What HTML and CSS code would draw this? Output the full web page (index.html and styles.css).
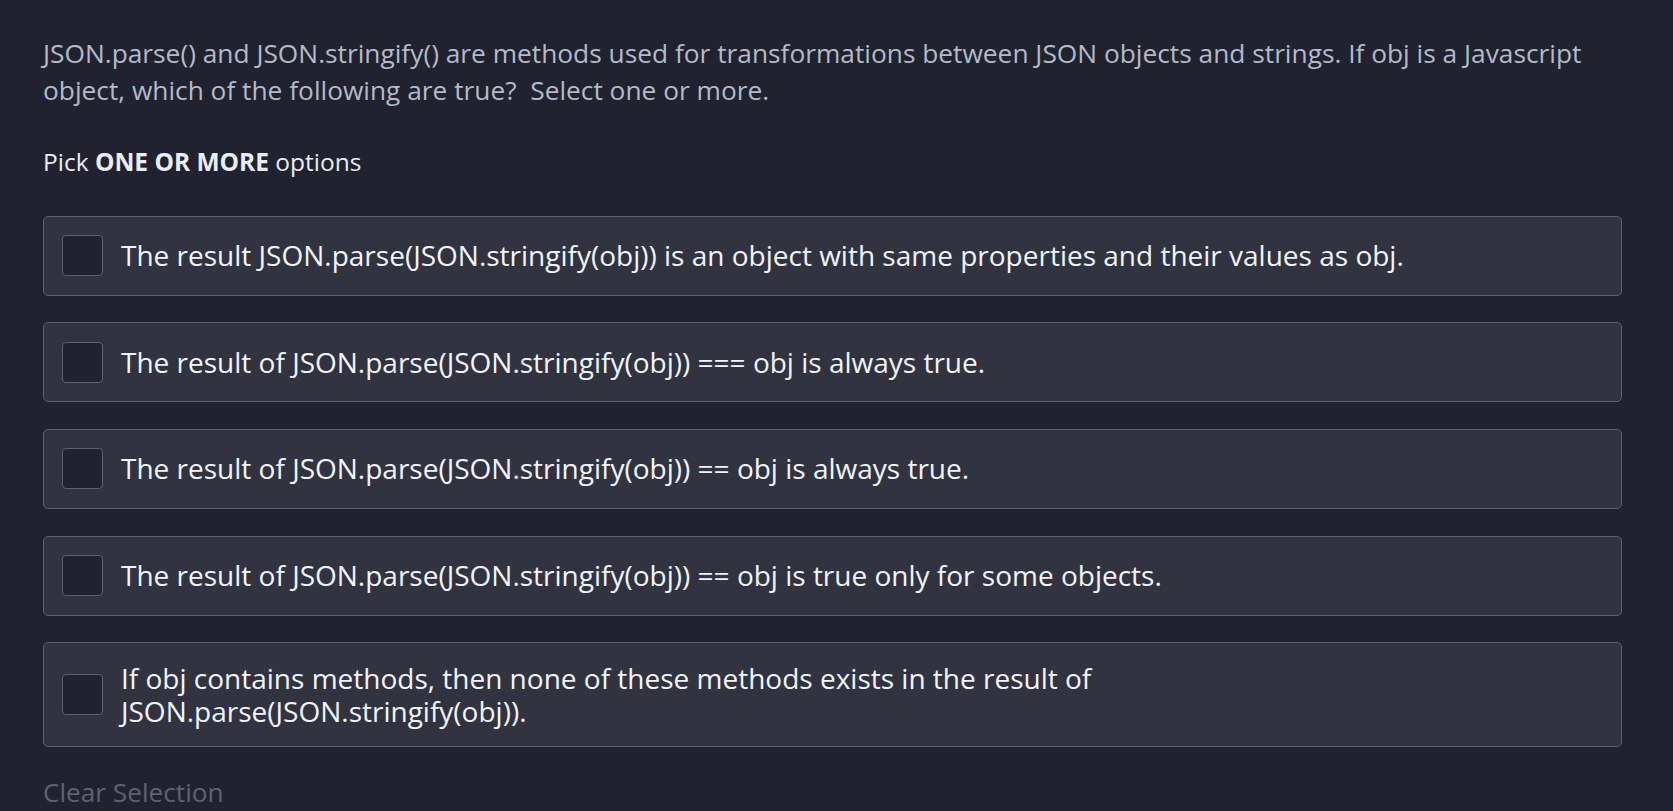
FILE: index.html
```html
<!DOCTYPE html>
<html>
<head>
<meta charset="utf-8">
<link rel="stylesheet" href="styles.css">
</head>
<body>
<div class="page">
  <p class="question">JSON.parse() and JSON.stringify() are methods used for transformations between JSON objects and strings. If obj is a Javascript object, which of the following are true?&nbsp; Select one or more.</p>
  <p class="pick">Pick <strong>ONE OR MORE</strong> options</p>
  <div class="options">
    <label class="option"><span class="box"></span><span class="text">The result JSON.parse(JSON.stringify(obj)) is an object with same properties and their values as obj.</span></label>
    <label class="option"><span class="box"></span><span class="text">The result of JSON.parse(JSON.stringify(obj)) === obj is always true.</span></label>
    <label class="option"><span class="box"></span><span class="text">The result of JSON.parse(JSON.stringify(obj)) == obj is always true.</span></label>
    <label class="option"><span class="box"></span><span class="text">The result of JSON.parse(JSON.stringify(obj)) == obj is true only for some objects.</span></label>
    <label class="option"><span class="box"></span><span class="text">If obj contains methods, then none of these methods exists in the result of JSON.parse(JSON.stringify(obj)).</span></label>
  </div>
  <div class="clear">Clear Selection</div>
</div>
</body>
</html>
```
FILE: styles.css
```css
html, body {
  margin: 0;
  padding: 0;
  background: #20232f;
  height: 100%;
  overflow: hidden;
}
body {
  font-family: "Open Sans", "Noto Sans", sans-serif;
}
.page {
  padding: 35px 51px 0 43px;
}
.question {
  margin: 0;
  font-size: 26.3px;
  line-height: 37px;
  color: #b3bac9;
  max-width: 1560px;
}
.pick {
  margin: 37px 0 0 0;
  font-size: 24.5px;
  line-height: 32px;
  color: #e9edf5;
}
.pick strong {
  font-weight: 700;
}
.options {
  display: flex;
  flex-direction: column;
  gap: 26.7px;
  margin-top: 37.5px;
}
.option {
  display: flex;
  align-items: center;
  gap: 18px;
  padding: 18.5px 18px;
  background: #313440;
  border: 1px solid #5c6070;
  border-radius: 5px;
}
.box {
  flex: none;
  width: 39px;
  height: 39px;
  background: #20232f;
  border: 1px solid #5c6070;
  border-radius: 4px;
}
.text {
  font-size: 28px;
  line-height: 33px;
  color: #f1f4fa;
  max-width: 1340px;
}
.clear {
  margin-top: 29px;
  font-size: 26.2px;
  line-height: 32px;
  color: #5d6273;
}
```
